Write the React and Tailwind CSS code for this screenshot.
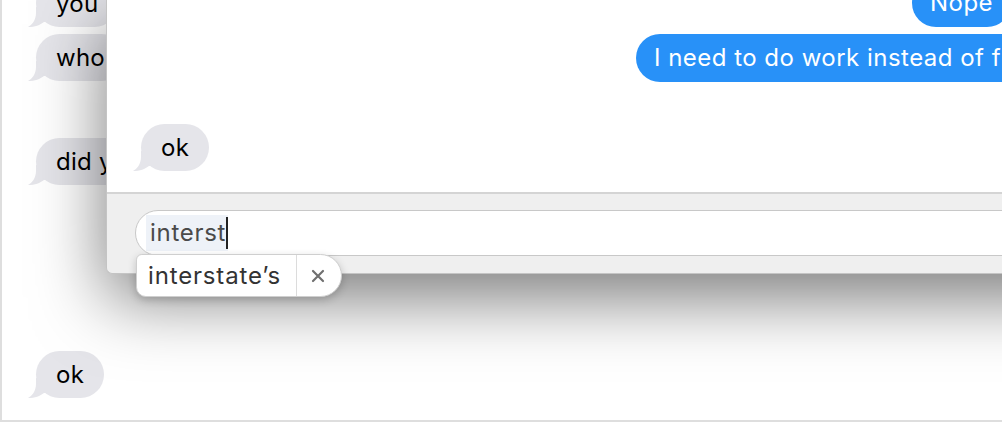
import React from 'react';

const font = { fontFamily: 'Inter, "Noto Sans", sans-serif' };

// little curled tail under a received bubble
const Tail = ({ color }) => (
  <svg className="absolute left-[-8px] bottom-0" width="20" height="20" viewBox="0 0 20 20">
    <path d="M8 0 L8 6 C8 13 4 18 0 20 C7 20 12 18 16 15 L20 15 L20 0 Z" fill={color} />
  </svg>
);

const Received = ({ text, className = '' }) => (
  <div className={`relative self-start ${className}`}>
    <Tail color="#e5e5ea" />
    <div className="relative h-[47px] rounded-[24px] bg-[#e5e5ea] px-[20px] flex items-center text-[24px] tracking-[0.01em] text-black whitespace-nowrap">
      {text}
    </div>
  </div>
);

const Sent = ({ text, className = '' }) => (
  <div className={`h-[48px] rounded-[24px] bg-[#2891f8] px-[18px] flex items-center text-[24px] tracking-[0.02em] text-white whitespace-nowrap ${className}`}>
    {text}
  </div>
);

const App = () => {
  return (
    <div style={font} className="relative w-[1002px] h-[424px] overflow-hidden bg-white">
      {/* conversation window in the back */}
      <div className="h-[422px] border-l-2 border-b-2 border-[#dedede] bg-white flex flex-col pl-[34px]">
        <Received text="you" className="mt-[-20px]" />
        <Received text="who" className="mt-[7px]" />
        <Received text="did you" className="mt-[57px]" />
        <Received text="ok" className="mt-[166px]" />
      </div>

      {/* conversation window in front */}
      <div className="absolute left-[106px] top-0 w-[1000px] h-[274px] flex flex-col bg-[#efefef] border-l border-b border-[#c4c4c4] rounded-bl-[6px] shadow-[0_24px_70px_rgba(0,0,0,0.52)]">
        <div className="h-[192px] bg-white flex flex-col overflow-hidden">
          <Sent text="Nope" className="self-start ml-[805px] mt-[-21px]" />
          <Sent text="I need to do work instead of fixing this" className="self-start ml-[529px] mt-[7px]" />
          <Received text="ok" className="ml-[34px] mt-[42px]" />
        </div>
        <div className="h-[2px] bg-[#d4d4d4]" />
        <div className="flex-1 pl-[28px] pt-[16px]">
          <div className="h-[46px] rounded-l-full border border-[#c8c8c8] bg-white flex items-center pl-[10px]">
            <div className="flex items-center h-[36px] pl-[4px] bg-[#eef2f8] text-[24px] tracking-[0.03em] text-[#4a4a4a]">
              interst
              <span className="w-[2px] h-[32px] bg-[#222]" />
            </div>
          </div>
        </div>
      </div>

      {/* autocorrect suggestion */}
      <div className="absolute left-[136px] top-[254px] h-[43px] flex items-stretch bg-white border border-[#cfcfcf] rounded-tl-[6px] rounded-bl-[10px] rounded-r-[22px] shadow-[0_3px_8px_rgba(0,0,0,0.2)]">
        <div className="flex items-center pl-[11px] pr-[15px] text-[24px] tracking-[0.035em] text-[#333]">interstate’s</div>
        <div className="w-px bg-[#dcdcdc]" />
        <div className="flex items-center justify-center w-[44px] pr-[2px]">
          <svg width="14" height="14" viewBox="0 0 14 14">
            <path d="M2 2 L12 12 M12 2 L2 12" stroke="#707070" strokeWidth="2.2" strokeLinecap="round" />
          </svg>
        </div>
      </div>
    </div>
  );
};

export default App;
